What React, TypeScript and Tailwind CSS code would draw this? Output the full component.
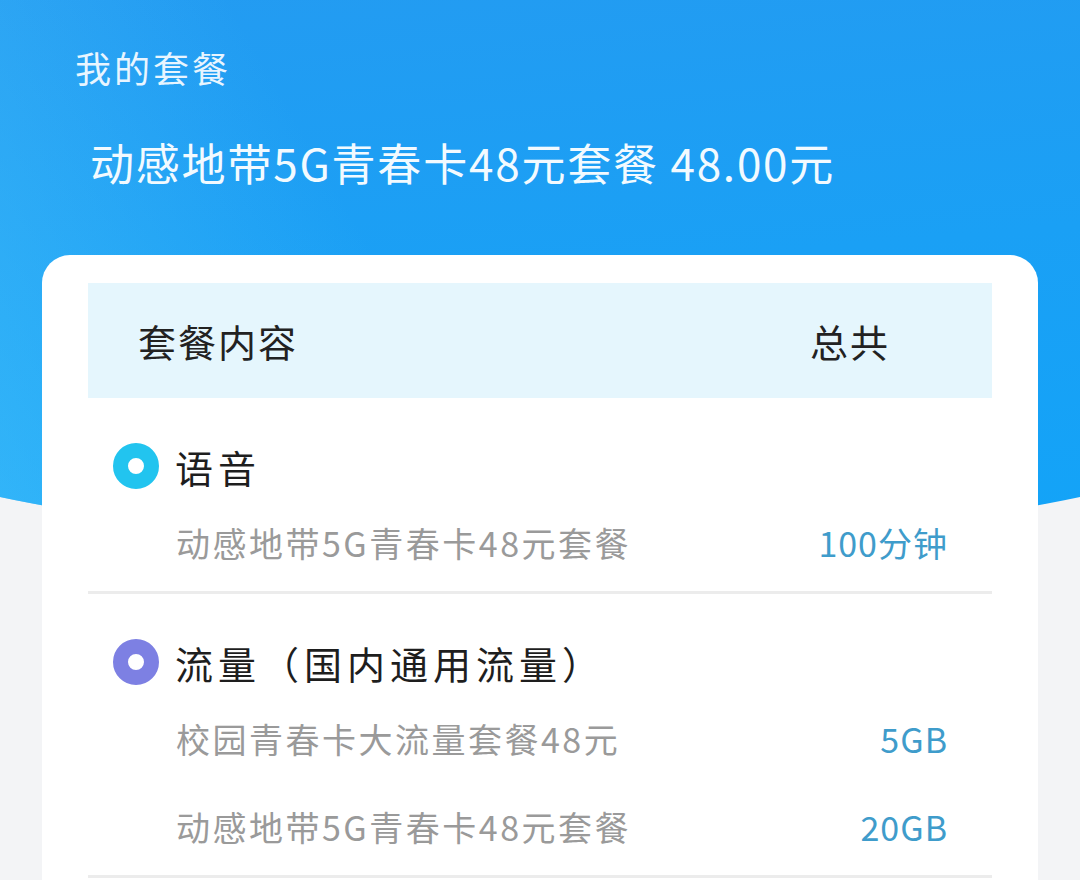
const font = { fontFamily: '"Noto Sans CJK SC", "Noto Sans", sans-serif' };

interface Item {
  name: string;
  value: string;
}

interface Section {
  title: string;
  dot: string;
  items: Item[];
}

const sections: Section[] = [
  {
    title: "语音",
    dot: "border-[#22c4ef]",
    items: [{ name: "动感地带5G青春卡48元套餐", value: "100分钟" }],
  },
  {
    title: "流量（国内通用流量）",
    dot: "border-[#7d80e3]",
    items: [
      { name: "校园青春卡大流量套餐48元", value: "5GB" },
      { name: "动感地带5G青春卡48元套餐", value: "20GB" },
    ],
  },
];

function PlanSection({ section }: { section: Section }) {
  return (
    <div className="pt-[38px] pb-[19px] border-b-[3px] border-[#ececec]">
      {/* title */}
      <div className="h-[60px] flex items-center pl-[25px] gap-[16px]">
        <div className={`w-[46px] h-[46px] rounded-full border-[15px] bg-white ${section.dot}`} />
        <span className="text-[38px] text-[#1e1e1e] tracking-[5px]">{section.title}</span>
      </div>
      {/* rows */}
      <div className="mt-[16px] flex flex-col gap-[28px]">
        {section.items.map((item, i) => (
          <div key={i} className="h-[60px] flex items-center justify-between pl-[88px] pr-[44px]">
            <span className="text-[34px] text-[#9a9a9a] tracking-[2.5px]">{item.name}</span>
            <span className="text-[34px] text-[#3f9ccb] tracking-[1px]">{item.value}</span>
          </div>
        ))}
      </div>
    </div>
  );
}

export default function App() {
  return (
    <div className="relative w-[1080px] h-[880px] overflow-hidden bg-[#f3f4f6]" style={font}>
      {/* blue header background */}
      <div className="absolute top-0 left-[-260px] w-[1600px] h-[546px] rounded-bl-[800px_187px] rounded-br-[800px_187px] bg-[linear-gradient(175deg,#249bf1_0%,#1aa0f5_50%,#12a4f8_100%)]">
        <div className="w-full h-full rounded-bl-[800px_187px] rounded-br-[800px_187px] bg-[linear-gradient(60deg,rgba(80,200,250,0.75)_0%,rgba(80,200,250,0.35)_22%,rgba(80,200,250,0)_42%)]" />
      </div>

      <div className="relative">
        <div className="pt-[37px] pl-[75px] h-[97px] flex items-end">
          <div className="h-[60px] flex items-center text-[36px] text-[#e8f5ff] tracking-[3px]">我的套餐</div>
        </div>
        <div className="mt-[35px] pl-[90px] h-[60px] flex items-center text-[44px] text-[#f2faff] tracking-[1.8px]">
          动感地带5G青春卡48元套餐 48.00元
        </div>

        {/* card */}
        <div className="mt-[63px] mx-[42px] bg-white rounded-t-[28px] pt-[28px] px-[46px] h-[700px]">
          <div className="h-[115px] bg-[#e5f6fd] flex items-center justify-between pl-[50px] pr-[102px]">
            <span className="text-[38px] text-[#222222] tracking-[2px]">套餐内容</span>
            <span className="text-[38px] text-[#222222] tracking-[2px]">总共</span>
          </div>
          {sections.map((s, i) => (
            <PlanSection key={i} section={s} />
          ))}
        </div>
      </div>
    </div>
  );
}
